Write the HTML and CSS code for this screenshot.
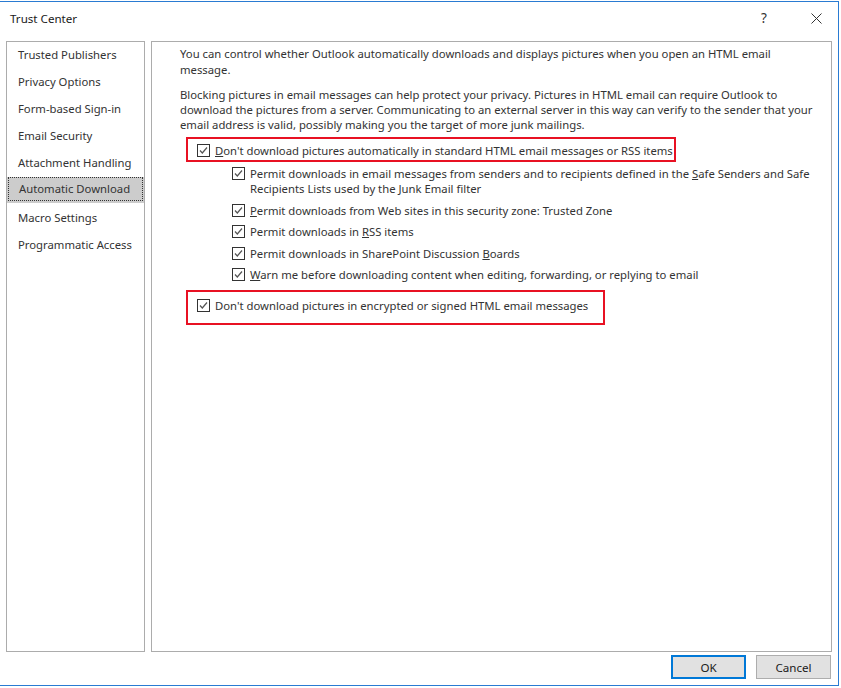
FILE: index.html
```html
<!DOCTYPE html>
<html lang="en">
<head>
    <meta charset="UTF-8">
    <title>Trust Center</title>
    <link rel="stylesheet" href="styles.css">
</head>
<body>

    <div class="dialog">
        <div class="titlebar">
            <div class="title">Trust Center</div>
            <div class="help">?</div>
            <div class="close">
                <svg width="11" height="11" viewBox="0 0 11 11"><path d="M0.5 0.5 L10.5 10.5 M10.5 0.5 L0.5 10.5" stroke="#333" stroke-width="1" fill="none"/></svg>
            </div>
        </div>

        <div class="main">
            <div class="nav">
                <div class="nav-item">Trusted Publishers</div>
                <div class="nav-item">Privacy Options</div>
                <div class="nav-item">Form-based Sign-in</div>
                <div class="nav-item">Email Security</div>
                <div class="nav-item">Attachment Handling</div>
                <div class="nav-item selected"><span>Automatic Download</span></div>
                <div class="nav-item">Macro Settings</div>
                <div class="nav-item">Programmatic Access</div>
            </div>

            <div class="pane">
                <p class="intro">You can control whether Outlook automatically downloads and displays pictures when you open an HTML email<br>message.</p>
                <p class="info">Blocking pictures in email messages can help protect your privacy. Pictures in HTML email can require Outlook to<br>download the pictures from a server. Communicating to an external server in this way can verify to the sender that your<br>email address is valid, possibly making you the target of more junk mailings.</p>

                <div class="mark mark-std">
                    <div class="option">
                        <span class="check"><svg width="13" height="13" viewBox="0 0 13 13"><rect x="0.5" y="0.5" width="12" height="12" fill="#fff" stroke="#333"/><path d="M3 6.5 L5.3 9 L10 3.5" stroke="#555" stroke-width="1.2" fill="none"/></svg></span>
                        <span><u>D</u>on't download pictures automatically in standard HTML email messages or RSS items</span>
                    </div>
                </div>

                <div class="suboptions">
                    <div class="option">
                        <span class="check"><svg width="13" height="13" viewBox="0 0 13 13"><rect x="0.5" y="0.5" width="12" height="12" fill="#fff" stroke="#333"/><path d="M3 6.5 L5.3 9 L10 3.5" stroke="#555" stroke-width="1.2" fill="none"/></svg></span>
                        <span>Permit downloads in email messages from senders and to recipients defined in the <u>S</u>afe Senders and Safe<br>Recipients Lists used by the Junk Email filter</span>
                    </div>
                    <div class="option">
                        <span class="check"><svg width="13" height="13" viewBox="0 0 13 13"><rect x="0.5" y="0.5" width="12" height="12" fill="#fff" stroke="#333"/><path d="M3 6.5 L5.3 9 L10 3.5" stroke="#555" stroke-width="1.2" fill="none"/></svg></span>
                        <span><u>P</u>ermit downloads from Web sites in this security zone: Trusted Zone</span>
                    </div>
                    <div class="option">
                        <span class="check"><svg width="13" height="13" viewBox="0 0 13 13"><rect x="0.5" y="0.5" width="12" height="12" fill="#fff" stroke="#333"/><path d="M3 6.5 L5.3 9 L10 3.5" stroke="#555" stroke-width="1.2" fill="none"/></svg></span>
                        <span>Permit downloads in <u>R</u>SS items</span>
                    </div>
                    <div class="option">
                        <span class="check"><svg width="13" height="13" viewBox="0 0 13 13"><rect x="0.5" y="0.5" width="12" height="12" fill="#fff" stroke="#333"/><path d="M3 6.5 L5.3 9 L10 3.5" stroke="#555" stroke-width="1.2" fill="none"/></svg></span>
                        <span>Permit downloads in SharePoint Discussion <u>B</u>oards</span>
                    </div>
                    <div class="option">
                        <span class="check"><svg width="13" height="13" viewBox="0 0 13 13"><rect x="0.5" y="0.5" width="12" height="12" fill="#fff" stroke="#333"/><path d="M3 6.5 L5.3 9 L10 3.5" stroke="#555" stroke-width="1.2" fill="none"/></svg></span>
                        <span><u>W</u>arn me before downloading content when editing, forwarding, or replying to email</span>
                    </div>
                </div>

                <div class="mark mark-enc">
                    <div class="option">
                        <span class="check"><svg width="13" height="13" viewBox="0 0 13 13"><rect x="0.5" y="0.5" width="12" height="12" fill="#fff" stroke="#333"/><path d="M3 6.5 L5.3 9 L10 3.5" stroke="#555" stroke-width="1.2" fill="none"/></svg></span>
                        <span>Don't download pictures in encrypted or signed HTML email messages</span>
                    </div>
                </div>
            </div>
        </div>

        <div class="footer">
            <button class="btn btn-ok">OK</button>
            <button class="btn">Cancel</button>
        </div>
    </div>

</body>
</html>
```

FILE: styles.css
```css
body {
    margin: 0;
    background: #fff;
    font-family: 'Noto Sans', 'Open Sans', sans-serif;
    font-size: 11.3px;
    color: #333;
    overflow: hidden;
}
.dialog {
    width: 839px;
    height: 685px;
    margin-top: 1px;
    box-sizing: border-box;
    border: 1px solid #2a7bd2;
    border-left: none;
    background: #fff;
    display: flex;
    flex-direction: column;
}
.titlebar {
    height: 39px;
    display: flex;
    align-items: center;
    padding: 0 0 7px 10px;
    box-sizing: border-box;
    font-size: 11.6px;
}
.title {
    flex: 1;
    color: #1a1a1a;
}
.help {
    width: 12px;
    margin-right: 38px;
    font-size: 13.5px;
    color: #333;
}
.close {
    width: 11px;
    height: 11px;
    margin-right: 16px;
    display: flex;
}
.main {
    display: flex;
    gap: 6px;
    padding-left: 6px;
    height: 611px;
}
.nav {
    width: 139px;
    box-sizing: border-box;
    border: 1px solid #acacac;
}
.nav-item {
    height: 27px;
    line-height: 25px;
    padding-left: 11px;
    white-space: nowrap;
}
.nav-item.selected {
    background: #cccccc;
    padding-left: 0;
    height: 26px;
    margin-top: -1px;
    margin-bottom: 2px;
}
.nav-item.selected span {
    display: block;
    margin: 1px;
    padding-left: 10px;
    line-height: 22px;
    border: 1px dotted #333;
}
.pane {
    width: 681px;
    box-sizing: border-box;
    border: 1px solid #acacac;
    padding: 4px 0 0 28px;
    white-space: nowrap;
}
.intro {
    margin: 0;
    line-height: 16px;
}
.info {
    margin: 9px 0 0;
    line-height: 15px;
}
.mark {
    box-sizing: border-box;
    border: 2px solid #e81123;
    margin-left: 6px;
    padding: 4px 0 2px 9px;
}
.mark-std {
    width: 490px;
    height: 25px;
    margin-top: 5px;
}
.mark-enc {
    width: 419px;
    height: 35px;
    margin-top: 8px;
    padding-top: 6px;
}
.option {
    display: flex;
    align-items: flex-start;
    line-height: 15px;
}
.check {
    width: 13px;
    height: 13px;
    margin: 1px 5px 0 0;
    flex: none;
    display: flex;
}
.suboptions {
    margin: 4px 0 0 52px;
    display: flex;
    flex-direction: column;
    gap: 6.6px;
}
.footer {
    display: flex;
    justify-content: flex-end;
    gap: 10px;
    padding: 3px 7px 0 0;
}
.btn {
    width: 75px;
    height: 24px;
    box-sizing: border-box;
    background: #e1e1e1;
    border: 1px solid #adadad;
    font-family: inherit;
    font-size: 11.6px;
    color: #1a1a1a;
    padding: 0;
}
.btn-ok {
    border: 2px solid #0078d7;
}
```
